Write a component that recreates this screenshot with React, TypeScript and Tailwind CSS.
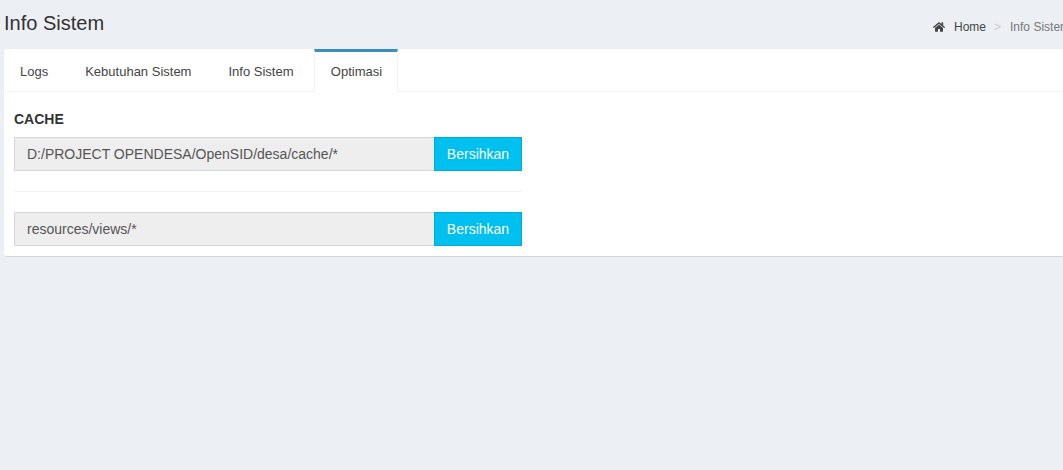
import { FaHome } from "react-icons/fa";

const tabs = ["Logs", "Kebutuhan Sistem", "Info Sistem"];

function Row({ value }: { value: string }) {
  return (
    <div className="flex w-[508px] h-[34px] text-[14px]">
      <div className="flex-1 flex items-center bg-[#eeeeee] border border-[#d2d6de] border-r-0 pl-3 text-[#555555]">{value}</div>
      <button className="w-[88px] bg-[#00c0ef] border border-[#00acd6] text-white text-[14px]">Bersihkan</button>
    </div>
  );
}

export default function App() {
  return (
    <div className="w-[1063px] h-[470px] overflow-hidden bg-[#eceff3] font-['Liberation_Sans',Arial,sans-serif] text-[#333333]">
      <div className="w-[1100px] pl-1">
        <div className="h-[49px] flex justify-between">
          <h1 className="text-[20px] leading-[22px] pt-[12px] text-[#333333]">Info Sistem</h1>
          <div className="flex items-center h-[18px] mt-[18px] text-[12px] w-[167px]">
            <FaHome className="text-[#444444] text-[12px]" />
            <span className="ml-[9px] text-[#444444]">Home</span>
            <span className="ml-[8px] text-[#cccccc]">&gt;</span>
            <span className="ml-[9px] text-[#777777]">Info Sistem</span>
          </div>
        </div>
        <div className="bg-white rounded-[3px] border-b border-[#d2d6de] h-[208px]">
          <div className="flex h-[43px] border-b border-[#f4f4f4] text-[13px] text-[#444444]">
            {tabs.map((t) => (
              <div key={t} className="px-[16px] mr-[5px] pt-[3px] flex items-center">{t}</div>
            ))}
            <div className="w-[84px] flex items-center justify-center h-[44px] pb-[1px] bg-white border-t-[3px] border-t-[#3c8dbc] border-x border-x-[#f4f4f4]">Optimasi</div>
          </div>
          <div className="px-[10px] pt-[19px]">
            <h4 className="text-[14px] font-bold leading-[16px] mb-[10px] text-[#333333]">CACHE</h4>
            <Row value="D:/PROJECT OPENDESA/OpenSID/desa/cache/*" />
            <div className="w-[508px] h-px bg-[#f4f4f4] mt-5 mb-5" />
            <Row value="resources/views/*" />
          </div>
        </div>
      </div>
    </div>
  );
}
